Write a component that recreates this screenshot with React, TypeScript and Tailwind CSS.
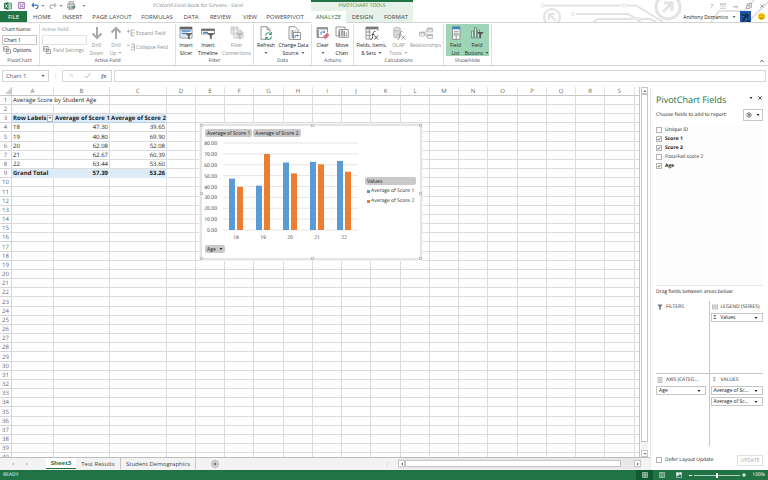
import React from 'react';
import { ChevronUp, Settings, X } from 'lucide-react';

const columns = 'ABCDEFGHIJKLMNOPQRS'.split('');
const rowNumbers = Array.from({ length: 40 }, (_, i) => i + 1);

const cells: Record<number, string[]> = {
  1: ['Average Score by Student Age'],
  3: ['Row Labels', 'Average of Score 1', 'Average of Score 2'],
  4: ['18', '47.30', '39.65'],
  5: ['19', '40.80', '69.90'],
  6: ['20', '62.08', '52.08'],
  7: ['21', '62.67', '60.39'],
  8: ['22', '63.44', '53.60'],
  9: ['Grand Total', '57.39', '53.26'],
};

const scores = [
  { age: '18', one: 47.3, two: 39.65 },
  { age: '19', one: 40.8, two: 69.9 },
  { age: '20', one: 62.08, two: 52.08 },
  { age: '21', one: 62.67, two: 60.39 },
  { age: '22', one: 63.44, two: 53.6 },
];

const fields = [
  { name: 'Unique ID', checked: false },
  { name: 'Score 1', checked: true },
  { name: 'Score 2', checked: true },
  { name: 'Pass/Fail score 2', checked: false },
  { name: 'Age', checked: true },
];

const tabs = [
  { name: 'HOME', width: 'w-[30px]' },
  { name: 'INSERT', width: 'w-[31px]' },
  { name: 'PAGE LAYOUT', width: 'w-[48px]' },
  { name: 'FORMULAS', width: 'w-[42px]' },
  { name: 'DATA', width: 'w-[26px]' },
  { name: 'REVIEW', width: 'w-[33px]' },
  { name: 'VIEW', width: 'w-[26px]' },
  { name: 'POWERPIVOT', width: 'w-[44px]' },
];

const Caret = ({ className = '' }: { className?: string }) => (
  <svg viewBox="0 0 6 4" className={`inline-block h-[2px] w-[4px] shrink-0 fill-current ${className}`}>
    <path d="M0 0h6L3 4z" />
  </svg>
);

const Icon = ({ children, className = 'size-3.5' }: { children: React.ReactNode; className?: string }) => (
  <svg viewBox="0 0 14 14" fill="none" stroke="#8a8a8a" strokeWidth="0.9" className={`shrink-0 ${className}`}>
    {children}
  </svg>
);

const Funnel = ({ color = '#666' }: { color?: string }) => (
  <path d="M6 7h7.5L10.7 10v3.5l-1.8-1V10z" fill={color} stroke="none" />
);

const icons = {
  down: <path d="M7 1v11M2.5 7.5L7 12l4.5-4.5" stroke="#a8a8a8" strokeWidth="2" />,
  up: <path d="M7 13V2M2.5 6.5L7 2l4.5 4.5" stroke="#a8a8a8" strokeWidth="2" />,
  slicer: (
    <>
      <path d="M1 1h12v11H1z" fill="#fff" />
      <path d="M1 1h12v2.5H1z" fill="#666" stroke="none" />
      <path d="M2.5 5h9M2.5 7.5h6" stroke="#3d85c6" strokeWidth="1.6" />
      <path d="M2.5 10h5" stroke="#bcd6ee" strokeWidth="1.4" />
      <Funnel />
    </>
  ),
  timeline: (
    <>
      <path d="M.5 3h13v5H.5z" fill="#fff" />
      <path d="M.5 3h13v1.8H.5z" fill="#666" stroke="none" />
      <path d="M2 6.5h5" stroke="#3d85c6" strokeWidth="1.5" />
      <Funnel />
    </>
  ),
  connections: (
    <g stroke="#c4c4c4">
      <path d="M1 1h7v7H1zM1 3h7M3.5 1v7M4 8v4h3M8 4h3v3" fill="#f1ecf3" />
      <path d="M7 6h6v6H7z" fill="#eee6f2" />
      <Funnel color="#bbb" />
    </g>
  ),
  refresh: (
    <>
      <path d="M2 .7h6l3 3v9.6H2z" fill="#fff" />
      <path d="M8 .7v3h3" />
      <circle cx="9.5" cy="10" r="4.2" fill="#fff" stroke="none" />
      <path d="M6.5 9.5a3 3 0 0 1 5.5-1.3M12.5 10.5A3 3 0 0 1 7 12M12.3 6v2.5H10M6.7 14v-2.5H9" stroke="#3f9b78" strokeWidth="1.1" />
    </>
  ),
  source: (
    <>
      <path d="M2 .7h6l3 3v9.6H2z" fill="#fff" />
      <path d="M3.5 5h6M3.5 7h6M3.5 9h4M3.5 11h3M5.5 4v8" strokeWidth="0.7" />
      <path d="M6.5 6.5h7v7h-7z" fill="#fff" />
      <path d="M8 12V9.5h3.5M10.3 8.2l1.4 1.3-1.4 1.3" stroke="#3d85c6" />
    </>
  ),
  clear: (
    <>
      <path d="M1 1.5h10.5v10H1z" fill="#fff" />
      <path d="M1 1.5h10.5v2H1zM1 4h2v7.5H1z" fill="#999" stroke="none" />
      <path d="M5 9V6h4M7.7 4.8L9 6 7.7 7.2" stroke="#3d85c6" />
      <path d="M6.5 11l4.5-4.5 2.7 2.5-4.5 4.5z" fill="#e2687a" stroke="#fff" strokeWidth="0.5" />
    </>
  ),
  move: (
    <>
      <path d="M1 1h9v9H1z" fill="#fff" />
      <path d="M4 3.5h9.3v7.8H4z" fill="#fff" />
      <path d="M4.5 5v5.5M7 3v7.5M9.2 5v5.5" stroke="#888" strokeWidth="1.4" />
      <path d="M11.3 6.5v4" stroke="#aaa" strokeWidth="1.2" />
    </>
  ),
  fx: (
    <>
      <path d="M1 1h12v12H1z" fill="#fff" />
      <path d="M1 1h12v2.3H1z" fill="#777" stroke="none" />
      <path d="M4.3 1v12M1 6h6M1 9.5h5" />
      <path d="M6 5h8v9H6z" fill="#fff" stroke="none" />
      <path d="M5.5 13.5c2 .3 2-2 2.3-4.5S8.5 5 10.5 5.5M6.5 8.5h3M9.5 9.5l3.500 4M13 9.5l-3.500 4" stroke="#444" />
    </>
  ),
  olap: (
    <>
      <path d="M1.5 3.5v7c0 2 7 2 7 0v-7" fill="#d4d4d4" stroke="#c4c4c4" />
      <ellipse cx="5" cy="3" rx="3.5" ry="1.7" fill="#e4e4e4" stroke="#bbb" />
      <path d="M5.5 13.5c2 .3 2-2 2.3-4.5S8.5 5 10.5 5.5M6.5 8.5h3M9.5 9.5l3.500 4M13 9.5l-3.500 4" stroke="#999" />
    </>
  ),
  relations: (
    <>
      <path d="M.5 6h5v4h-5zM8.5 2h5v4h-5zM8.5 8.5h5v4h-5z" fill="#eee" stroke="#bbb" />
      <path d="M.5 6h5v1.5h-5zM8.5 2h5v1.5h-5zM8.5 8.5h5V10h-5z" fill="#b5b5b5" stroke="none" />
      <path d="M5.5 8H7V4h1.5M7 8v2.5h1.5" stroke="#bbb" />
    </>
  ),
  fieldList: (
    <>
      <path d="M3.5.7h7.5v12.6H3.500z" fill="#fff" />
      <path d="M3.5.7H11v2.6H3.500z" fill="#3d85c6" stroke="none" />
      <path d="M5 5.3h4.5M5 7.3h4.5M3.5 9h7.5M7.2 9v4.3" />
    </>
  ),
  fieldButtons: (
    <>
      <path d="M1.5 5h2v7h-2zM4.5 1.5h2V12h-2zM7.5 4h2v8h-2z" fill="#cfe5d9" stroke="#6d8f80" />
      <path d="M7 6h6.8L11 8.8V12.5l-1.5-.8V8.8z" fill="#555" stroke="none" />
    </>
  ),
};

interface BigButtonProps {
  icon: keyof typeof icons;
  lines: string[];
  width: string;
  disabled?: boolean;
  caret?: boolean;
}

const BigButton: React.FC<BigButtonProps> = ({ icon, lines, width, disabled, caret }) => (
  <button
    disabled={disabled}
    className={`flex h-8 flex-col items-center pt-[2px] leading-[8px] whitespace-nowrap ${width} ${disabled ? 'text-[#909090]' : 'text-[#222]'}`}
  >
    <Icon>{icons[icon]}</Icon>
    <span className="mt-px">{lines[0]}</span>
    <span className="flex h-2 items-center gap-[2px]">
      {lines[1]}
      {caret && <Caret className="w-[3px] opacity-70" />}
    </span>
  </button>
);

const Group = ({ label, width, children }: { label: string; width: string; children: React.ReactNode }) => (
  <section className={`flex shrink-0 flex-col border-r border-[#e1e1e1] ${width}`}>
    <div className="flex flex-1 justify-center">{children}</div>
    <h2 className="text-center leading-[8px] text-[#444]">{label}</h2>
  </section>
);

const TitleBar = () => (
  <header className="flex h-[23px] shrink-0 border-b border-[#d5d5d5]">
    <div className="flex shrink-0 flex-col pr-1">
      <div className="flex h-[11px] items-center pl-1 text-[5px] text-[#888]">
        <Icon className="size-2">
          <path d="M0 2l8-2v14l-8-2z" fill="#217346" stroke="none" />
          <path d="M2 4l4 6M6 4l-4 6" stroke="#fff" strokeWidth="1.5" />
          <path d="M9 2h4v10H9M9 5h4M9 8.5h4" stroke="#217346" strokeWidth="1.2" />
        </Icon>
        <button aria-label="Save" className="ml-1.5">
          <Icon className="size-[7px]">
            <path d="M1 1h12v12H1zM4 1v5h6V1M4 13V9h6v4" stroke="#9b66b0" strokeWidth="1.6" />
          </Icon>
        </button>
        <button aria-label="Undo" className="ml-1.5 flex items-center gap-[2px]">
          <Icon className="size-2">
            <path d="M5 2L2 5.5 5 9M2 5.5h7c5 0 4 6-1 6" stroke="#3b6fb5" strokeWidth="2" />
          </Icon>
          <Caret className="w-[3px]" />
        </button>
        <button aria-label="Redo" className="ml-1 flex items-center gap-[2px]">
          <Icon className="size-2">
            <path d="M9 2l3 3.5L9 9M12 5.5H5c-5 0-4 6 1 6" stroke="#b5b5b5" strokeWidth="2" />
          </Icon>
          <Caret className="w-[3px]" />
        </button>
        <button aria-label="Quick print" className="ml-1">
          <Icon className="size-[9px]">
            <path d="M3 5V1h7v4M1 5h11v6H1zM3 9h7v4H3z" fill="#ddd" stroke="#777" />
            <circle cx="10.5" cy="9.5" r="2.5" fill="#4c9b6c" stroke="none" />
          </Icon>
        </button>
        <Caret className="ml-1.5 w-[3px]" />
        <h1 className="ml-auto pr-[64px] whitespace-nowrap">PCWorld Excel Book for Screens - Excel</h1>
      </div>
      <nav className="flex flex-1 text-[#444]">
        <button className="w-[27px] bg-[#217346] text-white">FILE</button>
        {tabs.map((tab) => (
          <button key={tab.name} className={`text-center whitespace-nowrap ${tab.width}`}>{tab.name}</button>
        ))}
      </nav>
    </div>
    <div className="flex w-[102px] shrink-0 flex-col border-t-2 border-[#217346] bg-[#e5f1e9]">
      <div className="h-[9px] text-center text-[5px] leading-[8px] text-[#1f7f3e]">PIVOTCHART TOOLS</div>
      <nav className="flex flex-1 text-[#444]">
        <button className="-mb-px w-[35px] bg-white text-[#217346]">ANALYZE</button>
        <button className="w-[33px]">DESIGN</button>
        <button className="w-[34px]">FORMAT</button>
      </nav>
    </div>
    <div className="relative flex min-w-0 flex-1 flex-col">
      <svg viewBox="0 0 355 22" preserveAspectRatio="xMaxYMin slice" fill="none" stroke="#e3e3e3" strokeWidth="2" className="absolute inset-0 h-full w-full">
        <path d="M132 5.5h76M213 5.5h10L250 22M163 14h52l13 8M180 22l5-3h35M227 19h10l6 3" />
        <circle cx="130" cy="5.5" r="1.7" strokeWidth="1" />
        <circle cx="211" cy="5.5" r="1.7" strokeWidth="1" />
        <circle cx="160" cy="14" r="1.7" strokeWidth="1" />
        <circle cx="225" cy="19" r="1.7" strokeWidth="1" />
        <circle cx="139" cy="17" r="8" />
        <path d="M143 21l-7-7M136 20v-6h6" />
        <circle cx="255" cy="7" r="12" strokeWidth="3" />
        <path d="M250 12l9-9M251 3h8v8" strokeWidth="3" />
        <path d="M298 22l8-11h25l10-11M335 22l20-20" />
      </svg>
      <div className="relative flex h-[11px] items-center justify-end gap-[7px] pr-[3px] text-[#888]">
        <button>?</button>
        <button aria-label="Ribbon display options"><Icon className="size-1.5"><path d="M0 1h14v12H0zM0 4h14M7 11V6M5 8l2-2 2 2" /></Icon></button>
        <button aria-label="Minimize"><Icon className="size-1.5"><path d="M1 9h11" strokeWidth="2" /></Icon></button>
        <button aria-label="Restore"><Icon className="size-1.5"><path d="M1 5h8v8H1zM4 5V1h9v9H9" strokeWidth="1.5" /></Icon></button>
        <button aria-label="Close"><X className="size-1.5" strokeWidth={3} /></button>
      </div>
      <div className="relative flex flex-1 items-center justify-end pr-[3px] text-[5px] text-[#222]">
        <button className="flex items-center gap-1 whitespace-nowrap">Anthony Domanico <Caret className="w-[3px] opacity-70" /></button>
        <svg viewBox="0 0 11 11" className="ml-1 size-[11px]">
          <path d="M0 0h11v11H0z" fill="#1b54b0" />
          <path d="M1 2l3 2 2-2 3 1v3l-3 1-2 4H2l1-4zM7 8l3 1v2H7z" fill="#163257" />
          <path d="M3 6l1-1M8 2l1 1M6 8l1 1" stroke="#7a8f5a" />
        </svg>
        <button aria-label="Send a smile" className="ml-[7px]">
          <svg viewBox="0 0 14 14" className="size-[7px]">
            <circle cx="7" cy="7" r="7" fill="#f6c90e" />
            <path d="M4 4v2M10 4v2M3 8c1 4 7 4 8 0" stroke="#7a5c00" strokeWidth="1.3" fill="none" />
          </svg>
        </button>
      </div>
    </div>
  </header>
);

const Ribbon = () => (
  <div className="relative flex h-[43px] shrink-0 border-b border-[#d5d5d5] pt-px text-[5px]">
    <Group label="PivotChart" width="w-[40px]">
      <div className="flex w-full flex-col pt-[2px] pr-[2px] pl-[2px] text-[#222]">
        <label htmlFor="chart-name" className="leading-[8px] whitespace-nowrap">Chart Name:</label>
        <input id="chart-name" defaultValue="Chart 1" className="mt-px h-2.5 w-full border border-[#c6c6c6] px-px" />
        <button className="mt-px flex items-center gap-[2px] pl-px leading-[8px]">
          <Icon className="size-2"><path d="M1 1h8v8H1zM3 3v4M6 3v4M6 6h7v7H6zM8 9h3" strokeWidth="1.3" /></Icon>
          Options
        </button>
      </div>
    </Group>
    <Group label="Active Field" width="w-[136px]">
      <div className="flex w-full text-[#909090]">
        <div className="flex w-[47px] flex-col pt-[2px] pl-[2px]">
          <label htmlFor="active-field" className="leading-[8px]">Active Field:</label>
          <input id="active-field" disabled className="mt-px h-2.5 w-full border border-[#e4e4e4]" />
          <button disabled className="mt-px flex items-center gap-[2px] pl-px leading-[8px] whitespace-nowrap">
            <Icon className="size-2"><path d="M1 1h8v8H1zM3 3v4M6 3v4M6 6h7v7H6zM8 9h3" strokeWidth="1.3" /></Icon>
            Field Settings
          </button>
        </div>
        <BigButton icon="down" lines={['Drill', 'Down']} width="w-[19px]" disabled />
        <BigButton icon="up" lines={['Drill', 'Up']} width="w-[20px]" disabled caret />
        <div className="flex flex-col gap-1.5 pt-[5px] pl-px leading-[8px] whitespace-nowrap">
          <button disabled className="flex items-center gap-px">
            <Icon className="size-2"><path d="M0 4h5M2.5 1.5v5M7 2h6M7 7h6M7 12h6M7 2v10" stroke="#999" strokeWidth="1.3" /></Icon>
            Expand Field
          </button>
          <button disabled className="flex items-center gap-px">
            <Icon className="size-2"><path d="M0 4h5M7 2h6M7 7h6M7 12h6M13 2v10" stroke="#999" strokeWidth="1.3" /></Icon>
            Collapse Field
          </button>
        </div>
      </div>
    </Group>
    <Group label="Filter" width="w-[78px]">
      <BigButton icon="slicer" lines={['Insert', 'Slicer']} width="w-[18px]" />
      <BigButton icon="timeline" lines={['Insert', 'Timeline']} width="w-[26px]" />
      <BigButton icon="connections" lines={['Filter', 'Connections']} width="w-[31px]" disabled />
    </Group>
    <Group label="Data" width="w-[58px]">
      <BigButton icon="refresh" lines={['Refresh', '']} width="w-[22px]" caret />
      <BigButton icon="source" lines={['Change Data', 'Source']} width="w-[33px]" caret />
    </Group>
    <Group label="Actions" width="w-[42px]">
      <BigButton icon="clear" lines={['Clear', '']} width="w-[19px]" caret />
      <BigButton icon="move" lines={['Move', 'Chart']} width="w-[20px]" />
    </Group>
    <Group label="Calculations" width="w-[90px]">
      <BigButton icon="fx" lines={['Fields, Items,', '& Sets']} width="w-[32px]" caret />
      <BigButton icon="olap" lines={['OLAP', 'Tools']} width="w-[22px]" disabled caret />
      <BigButton icon="relations" lines={['Relationships', '']} width="w-[32px]" disabled />
    </Group>
    <Group label="Show/Hide" width="w-[48px]">
      <div className="flex h-8 bg-[#9fd5b7]">
        <BigButton icon="fieldList" lines={['Field', 'List']} width="w-[19px]" />
        <BigButton icon="fieldButtons" lines={['Field', 'Buttons']} width="w-[24px]" caret />
      </div>
    </Group>
    <button aria-label="Collapse the ribbon" className="mt-auto ml-auto px-[3px] pb-px text-[#555]">
      <ChevronUp className="size-1.5" strokeWidth={4} />
    </button>
  </div>
);

const FormulaBar = () => (
  <div className="flex h-[21px] shrink-0 items-center px-[2px] pb-[2px] text-[#555]">
    <div className="flex h-3 w-[47px] items-center justify-between border border-[#d5d5d5] px-[3px]">
      <input aria-label="Name box" defaultValue="Chart 1" className="w-8" />
      <Caret />
    </div>
    <span className="w-[13px] text-center text-[#aaa]">⋮</span>
    <div className="flex h-3 w-[50px] items-center justify-around border border-[#d5d5d5]">
      <button aria-label="Cancel"><X className="size-[7px] text-[#bbb]" /></button>
      <button aria-label="Enter"><Icon className="size-[7px]"><path d="M1 8l4 4 8-10" stroke="#bbb" strokeWidth="2" /></Icon></button>
      <button aria-label="Insert function" className="font-['Liberation_Serif',serif] font-bold italic">fx</button>
    </div>
    <input aria-label="Formula" className="ml-[2px] h-3 min-w-0 flex-1 border border-[#d5d5d5]" />
  </div>
);

const columnWidth = (index: number) => {
  if (index === 0) return 'w-[42px]';
  if (index === 2) return 'w-[57px]';
  if (index < 3) return 'w-[56px]';
  return index % 4 === 2 ? 'w-[30px]' : 'w-[29px]';
};

const cellStyle = (row: number, col: number) => {
  if (col > 2) return '';
  if (row === 3) return 'bg-[#ddebf7] font-bold border-[#ddebf7] border-b-[#b5d0e8] whitespace-nowrap';
  if (row === 9) return `bg-[#ddebf7] font-bold border-[#ddebf7] ${col > 0 ? 'text-right' : ''}`;
  if (row > 3 && row < 9) return col > 0 ? 'text-right' : '';
  return '';
};

const Sheet = () => (
  <table className="w-full table-fixed border-separate border-spacing-0 text-[#222]">
    <colgroup>
      <col className="w-[12px]" />
      {columns.map((name, i) => <col key={name} className={columnWidth(i)} />)}
      <col />
    </colgroup>
    <thead>
      <tr className="h-[9px] text-[#666]">
        <td className="border-r border-b border-[#c6c6c6] p-0">
          <svg viewBox="0 0 6 6" className="ml-auto size-1.5 fill-[#ccc]"><path d="M6 0v6H0z" /></svg>
        </td>
        {columns.map((name) => (
          <th key={name} scope="col" className="border-r border-b border-r-[#e1e1e1] border-b-[#c6c6c6] p-0 leading-[8px] font-normal">{name}</th>
        ))}
        <td className="border-b border-[#c6c6c6] p-0" />
      </tr>
    </thead>
    <tbody>
      {rowNumbers.map((row) => (
        <tr key={row} className={row % 6 === 5 ? 'h-2.5' : 'h-[9px]'}>
          <th scope="row" className="border-r border-b border-[#d5d5d5] p-0 text-center leading-[8px] font-normal text-[#666]">{row}</th>
          {columns.map((name, col) => (
            <td key={name} className={`border-r border-b border-[#dcdcdc] px-px py-0 leading-[8px] ${row === 1 ? 'whitespace-nowrap' : ''} ${row === 1 && col < 1 ? 'border-r-transparent' : ''} ${cellStyle(row, col)}`}>
              {row === 3 && col === 0 ? (
                <span className="flex items-center justify-between">
                  Row Labels
                  <button aria-label="Filter row labels" className="flex size-[7px] items-center justify-center border border-[#b5b5b5] bg-white text-[#666]"><Caret className="w-[3px]" /></button>
                </span>
              ) : cells[row]?.[col]}
            </td>
          ))}
          <td className="border-b border-[#dcdcdc] p-0" />
        </tr>
      ))}
    </tbody>
  </table>
);

const Handle = ({ className }: { className: string }) => (
  <span className={`absolute size-[3px] border border-[#c0c0c0] bg-white ${className}`} />
);

const PivotChart = () => (
  <figure className="absolute top-[37px] left-[200px] w-[222px] border-2 border-[#e4e4e4] bg-white text-[5px] text-[#222] outline outline-[#f3f3f3]">
    <div className="flex gap-px pt-[3px] pl-[3px]">
      <button className="h-2 rounded-xs bg-[#c9c9c9] px-[2px] leading-[8px] whitespace-nowrap">Average of Score 1</button>
      <button className="h-2 rounded-xs bg-[#c9c9c9] px-[2px] leading-[8px] whitespace-nowrap">Average of Score 2</button>
    </div>
    <div className="flex">
      <svg viewBox="0 0 160 106" className="h-[106px] w-[160px] shrink-0" role="img" aria-label="Average scores by age">
        {[80, 70, 60, 50, 40, 30, 20, 10, 0].map((value) => (
          <g key={value}>
            <text x="15" y={95 - value * 1.087} fontSize="5" textAnchor="end" fill="#333">{value.toFixed(2)}</text>
            <path d={`M21 ${93 - value * 1.087}h135`} stroke="#dedede" strokeWidth="0.8" />
          </g>
        ))}
        {scores.map((score, i) => (
          <g key={score.age}>
            <rect x={27 + i * 27} y={93 - score.one * 1.087} width="6" height={score.one * 1.087} fill="#5b9bd5" />
            <rect x={35 + i * 27} y={93 - score.two * 1.087} width="6" height={score.two * 1.087} fill="#ed7d31" />
            <text x={34 + i * 27} y="102" fontSize="5" textAnchor="middle" fill="#333">{score.age}</text>
          </g>
        ))}
      </svg>
      <div className="flex flex-1 flex-col gap-[2px] pt-10 pr-[4px] pl-[3px] leading-[8px] whitespace-nowrap">
        <button className="h-2 rounded-xs bg-[#c9c9c9] px-[2px] text-left">Values</button>
        <span className="flex items-center gap-px pl-[2px]"><i className="size-[3px] bg-[#5b9bd5]" />Average of Score 1</span>
        <span className="flex items-center gap-px pl-[2px]"><i className="size-[3px] bg-[#ed7d31]" />Average of Score 2</span>
      </div>
    </div>
    <div className="pt-[2px] pb-[5px] pl-[3px]">
      <button className="flex h-2 w-5 items-center justify-between rounded-xs bg-[#c9c9c9] px-[2px] leading-[8px]">Age <Caret /></button>
    </div>
    <Handle className="-top-[2px] -left-[2px]" />
    <Handle className="-top-[2px] left-1/2" />
    <Handle className="-top-[2px] -right-[2px]" />
    <Handle className="top-1/2 -left-[2px]" />
    <Handle className="top-1/2 -right-[2px]" />
    <Handle className="-bottom-[2px] -left-[2px]" />
    <Handle className="-bottom-[2px] left-1/2" />
    <Handle className="-right-[2px] -bottom-[2px]" />
  </figure>
);

const ScrollButton = ({ label, turn }: { label: string; turn: string }) => (
  <button aria-label={label} className="flex size-[7px] shrink-0 items-center justify-center border border-[#c6c6c6] bg-white text-[#777]">
    <Caret className={turn} />
  </button>
);

const SheetTabs = () => (
  <div className="flex h-[13px] shrink-0 items-stretch border-t border-[#bcbcbc] bg-[#f3f3f3] pb-px text-[#444]">
    <div className="flex w-[46px] items-center justify-center gap-2.5 pr-1.5 text-[#bbb]">
      <button aria-label="Previous sheet"><Caret className="rotate-90" /></button>
      <button aria-label="Next sheet"><Caret className="-rotate-90" /></button>
    </div>
    <button className="w-[30px] border-b border-[#217346] bg-white font-bold text-[#217346]">Sheet3</button>
    <button className="w-[45px] border-r border-[#c6c6c6] whitespace-nowrap">Test Results</button>
    <button className="w-[75px] border-r border-[#c6c6c6] whitespace-nowrap">Student Demographics</button>
    <button aria-label="New sheet" className="ml-[15px]">
      <Icon className="size-2"><circle cx="7" cy="7" r="6" strokeWidth="1.3" /><path d="M7 3.5v7M3.5 7h7" stroke="#555" strokeWidth="1.6" /></Icon>
    </button>
    <span className="ml-auto self-center text-[#aaa]">⋮</span>
    <div className="mr-[9px] ml-2 flex w-[243px] items-center bg-[#e8e8e8]">
      <ScrollButton label="Scroll left" turn="rotate-90" />
      <div className="h-[7px] w-[216px] border border-[#c6c6c6] bg-white" />
      <span className="flex-1" />
      <ScrollButton label="Scroll right" turn="-rotate-90" />
    </div>
  </div>
);

const AreaItem = ({ children }: { children: React.ReactNode }) => (
  <button className="flex h-[9px] w-full items-center justify-between border border-[#c6c6c6] bg-white pr-1 pl-[2px] leading-[7px] whitespace-nowrap">
    <span>{children}</span>
    <Caret className="text-[#222]" />
  </button>
);

const Area = ({ title, icon, className, children }: { title: string; icon: React.ReactNode; className: string; children?: React.ReactNode }) => (
  <section className={`flex min-w-0 flex-col gap-[2px] pt-[2px] ${className}`}>
    <h3 className="flex h-2 items-center gap-[3px] px-px whitespace-nowrap">
      <span className="flex w-1.5 justify-center">{icon}</span>
      {title}
    </h3>
    {children}
  </section>
);

const FieldsPane = () => (
  <aside className="flex w-[118px] shrink-0 flex-col border-l border-[#e8e8e8] pr-[5px] pl-[5px] text-[5px] text-[#222]">
    <div className="flex h-[22px] items-center pt-[3px]">
      <h2 className="text-[9px] whitespace-nowrap text-[#217346]">PivotChart Fields</h2>
      <button aria-label="Pane options" className="mb-1 ml-auto"><Caret /></button>
      <button aria-label="Close pane" className="mb-1 ml-1"><X className="size-1.5" strokeWidth={3} /></button>
    </div>
    <div className="flex items-center justify-between whitespace-nowrap">
      Choose fields to add to report:
      <button aria-label="Tools" className="flex h-3 w-5 items-center justify-center gap-1 border border-[#c6c6c6]">
        <Settings className="size-1.5" />
        <Caret />
      </button>
    </div>
    <ul className="mt-1 flex-1 bg-[#fdfdfd]">
      {fields.map((field) => (
        <li key={field.name} className="h-[9px]">
          <label className={`flex h-full items-center gap-[3px] ${field.checked ? 'font-bold' : ''}`}>
            <span className="relative flex">
              <input type="checkbox" defaultChecked={field.checked} className="peer size-1.5 appearance-none border border-[#b5b5b5] bg-white" />
              <svg viewBox="0 0 6 6" className="pointer-events-none absolute inset-0 hidden size-1.5 stroke-[#555] peer-checked:block" fill="none"><path d="M1.5 3l1 1.2L4.5 1.8" strokeWidth="0.9" /></svg>
            </span>
            {field.name}
          </label>
        </li>
      ))}
    </ul>
    <p className="border-t border-[#e8e8e8] pt-[2px] leading-[9px] whitespace-nowrap">Drag fields between areas below:</p>
    <div className="mt-1 grid grid-cols-2 grid-rows-[73px_72px]">
      <Area title="FILTERS" className="border-r border-b border-[#c6c6c6] pr-[3px]" icon={<Icon className="size-1.5"><path d="M1 1h12L9 7v6H5V7z" fill="#777" stroke="none" /></Icon>} />
      <Area title="LEGEND (SERIES)" className="border-b border-[#c6c6c6] pl-px" icon={<Icon className="size-1.5"><path d="M2 1v12M7 1v12M12 1v12" strokeWidth="2" /></Icon>}>
        <AreaItem>Σ&nbsp;&nbsp; Values</AreaItem>
      </Area>
      <Area title="AXIS (CATEG..." className="border-r border-[#c6c6c6] pr-[3px]" icon={<Icon className="size-1.5"><path d="M1 2h12M1 7h12M1 12h12" strokeWidth="2" /></Icon>}>
        <AreaItem>Age</AreaItem>
      </Area>
      <Area title="VALUES" className="pl-px" icon="Σ">
        <AreaItem>Average of Sc...</AreaItem>
        <AreaItem>Average of Sc...</AreaItem>
      </Area>
    </div>
    <div className="mt-1 flex h-5 items-center justify-between whitespace-nowrap">
      <label className="flex items-center gap-[3px]">
        <input type="checkbox" className="size-1.5 appearance-none border border-[#b5b5b5]" />
        Defer Layout Update
      </label>
      <button disabled className="h-[11px] w-[26px] border border-[#e1e1e1] text-[#aaa]">UPDATE</button>
    </div>
  </aside>
);

const StatusBar = () => (
  <footer className="flex h-2.5 shrink-0 items-center bg-[#217346] pr-[3px] pl-[3px] text-[5px] text-white">
    <span className="mr-auto">READY</span>
    <button aria-label="Normal view" className="flex h-full w-[17px] items-center justify-center bg-[#0f5a32]">
      <Icon className="size-1.5"><path d="M1 1h12v12H1zM1 5h12M1 9h12M5 1v12M9 1v12" stroke="#e5f1e9" strokeWidth="1.3" /></Icon>
    </button>
    <button aria-label="Page layout view" className="ml-1.5">
      <Icon className="size-1.5"><path d="M1 1h12v12H1zM3 4h8M3 7h8M3 10h8" stroke="#cfe5d9" strokeWidth="1.5" /></Icon>
    </button>
    <button aria-label="Page break preview" className="ml-[11px]">
      <Icon className="size-1.5"><path d="M1 1h5v7H1zM8 1h5v5H8z" fill="#fff" stroke="#fff" /><path d="M1 8v5h12V6" stroke="#cfe5d9" strokeWidth="1.5" /></Icon>
    </button>
    <button aria-label="Zoom out" className="ml-[7px] h-px w-[3px] bg-white" />
    <input
      type="range"
      aria-label="Zoom"
      defaultValue={50}
      className="mx-[2px] h-[5px] w-[46px] appearance-none bg-[linear-gradient(#b5d0c0,#b5d0c0)] bg-[length:100%_1px] bg-center bg-no-repeat [&::-webkit-slider-thumb]:h-[5px] [&::-webkit-slider-thumb]:w-[2px] [&::-webkit-slider-thumb]:appearance-none [&::-webkit-slider-thumb]:bg-white"
    />
    <button aria-label="Zoom in"><Icon className="size-1"><path d="M7 0v14M0 7h14" stroke="#fff" strokeWidth="3.5" /></Icon></button>
    <span className="ml-1.5">100%</span>
  </footer>
);

const App: React.FC = () => {
  return (
    <div className="flex h-screen flex-col overflow-hidden bg-white font-['Open_Sans','Noto_Sans',sans-serif] text-[6px] leading-[8px] [text-rendering:geometricPrecision]">
      <TitleBar />
      <Ribbon />
      <FormulaBar />
      <div className="flex min-h-0 flex-1">
        <main className="flex min-w-0 flex-1 flex-col">
          <div className="flex min-h-0 flex-1 gap-px">
            <div className="relative min-w-0 flex-1 overflow-hidden border-r border-[#c6c6c6]">
              <Sheet />
              <PivotChart />
            </div>
            <div className="mr-[2px] flex w-[7px] flex-col bg-[#f3f3f3]">
              <ScrollButton label="Scroll up" turn="rotate-180" />
              <div className="flex-1 border border-[#c6c6c6] bg-white" />
              <span className="h-2" />
              <ScrollButton label="Scroll down" turn="" />
            </div>
          </div>
          <SheetTabs />
        </main>
        <FieldsPane />
      </div>
      <StatusBar />
    </div>
  );
};

export default App;
